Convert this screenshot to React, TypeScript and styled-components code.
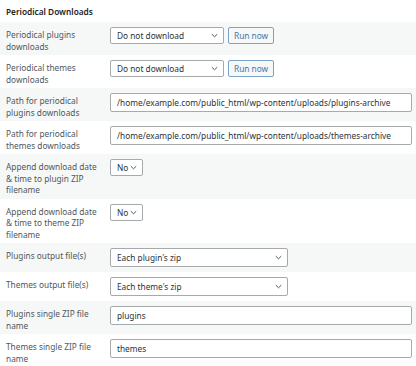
import React from "react"
import styled, { createGlobalStyle } from "styled-components"

const GlobalStyle = createGlobalStyle`
  body {
    margin: 0;
    background: #ffffff;
    font-family: "Noto Sans", "Open Sans", sans-serif;
    font-size: 8.3px;
    color: #3c434a;
  }
`

type Row =
  | { label: string; kind: "schedule"; value: string }
  | { label: string; kind: "path"; value: string }
  | { label: string; kind: "yesno"; value: string }
  | { label: string; kind: "output"; value: string }
  | { label: string; kind: "text"; value: string }

const rows: Row[] = [
  { label: "Periodical plugins downloads", kind: "schedule", value: "Do not download" },
  { label: "Periodical themes downloads", kind: "schedule", value: "Do not download" },
  {
    label: "Path for periodical plugins downloads",
    kind: "path",
    value: "/home/example.com/public_html/wp-content/uploads/plugins-archive",
  },
  {
    label: "Path for periodical themes downloads",
    kind: "path",
    value: "/home/example.com/public_html/wp-content/uploads/themes-archive",
  },
  { label: "Append download date & time to plugin ZIP filename", kind: "yesno", value: "No" },
  { label: "Append download date & time to theme ZIP filename", kind: "yesno", value: "No" },
  { label: "Plugins output file(s)", kind: "output", value: "Each plugin's zip" },
  { label: "Themes output file(s)", kind: "output", value: "Each theme's zip" },
  { label: "Plugins single ZIP file name", kind: "text", value: "plugins" },
  { label: "Themes single ZIP file name", kind: "text", value: "themes" },
]

const Chevron = () => (
  <svg width="7" height="5" viewBox="0 0 7 5">
    <path d="M0.8 1.2 L3.5 3.8 L6.2 1.2" fill="none" stroke="#50575e" strokeWidth="1" />
  </svg>
)

const renderControl = (row: Row) => {
  switch (row.kind) {
    case "schedule":
      return (
        <Inline>
          <Select width={114}>
            <span>{row.value}</span>
            <Chevron />
          </Select>
          <Button>Run now</Button>
        </Inline>
      )
    case "path":
      return <Input>{row.value}</Input>
    case "yesno":
      return (
        <Select width={33}>
          <span>{row.value}</span>
          <Chevron />
        </Select>
      )
    case "output":
      return (
        <Select width={178} tall>
          <span>{row.value}</span>
          <Chevron />
        </Select>
      )
    case "text":
      return <Input>{row.value}</Input>
  }
}

const App = () => {
  return (
    <>
      <GlobalStyle />
      <Section>
        <Heading>Periodical Downloads</Heading>
        <Table>
          {rows.map((row, i) => (
            <FormRow key={i} striped={i % 2 === 0}>
              <Label>{row.label}</Label>
              <Field>{renderControl(row)}</Field>
            </FormRow>
          ))}
        </Table>
      </Section>
    </>
  )
}

const Section = styled.div`
  display: grid;
`

const Heading = styled.h2`
  margin: 0;
  padding: 6px 6px 4px;
  font-size: 8.3px;
  line-height: 12px;
  font-weight: 600;
  color: #1d2327;
`

const Table = styled.div`
  display: grid;
`

const FormRow = styled.div<{ striped: boolean }>`
  display: grid;
  grid-template-columns: 110px 1fr;
  align-items: start;
  background: ${p => (p.striped ? "#f6f7f7" : "#ffffff")};
`

const Label = styled.div`
  padding: 7px 0 3px 6px;
  width: 94px;
  line-height: 11.5px;
  color: #50575e;
`

const Field = styled.div`
  padding: 5px 4px 5px 0;
  display: flex;
`

const Inline = styled.div`
  display: flex;
  gap: 4px;
`

const Select = styled.div<{ width: number; tall?: boolean }>`
  box-sizing: border-box;
  width: ${p => p.width}px;
  height: ${p => (p.tall ? 19 : 17)}px;
  display: flex;
  align-items: center;
  justify-content: space-between;
  padding: 0 5px 0 6px;
  background: #ffffff;
  border: 1px solid #a7aaad;
  border-radius: 2px;
  color: #2c3338;
  white-space: nowrap;
`

const Button = styled.div`
  box-sizing: border-box;
  height: 17px;
  display: flex;
  align-items: center;
  padding: 0 5px;
  background: #f6f7f7;
  border: 1px solid #7aa3cc;
  border-radius: 2px;
  color: #3f77ad;
  white-space: nowrap;
`

const Input = styled.div`
  box-sizing: border-box;
  flex: 1;
  height: 19px;
  display: flex;
  align-items: center;
  padding: 0 6px;
  background: #ffffff;
  border: 1px solid #a7aaad;
  border-radius: 2px;
  color: #2c3338;
  white-space: nowrap;
  overflow: hidden;
`

export default App
